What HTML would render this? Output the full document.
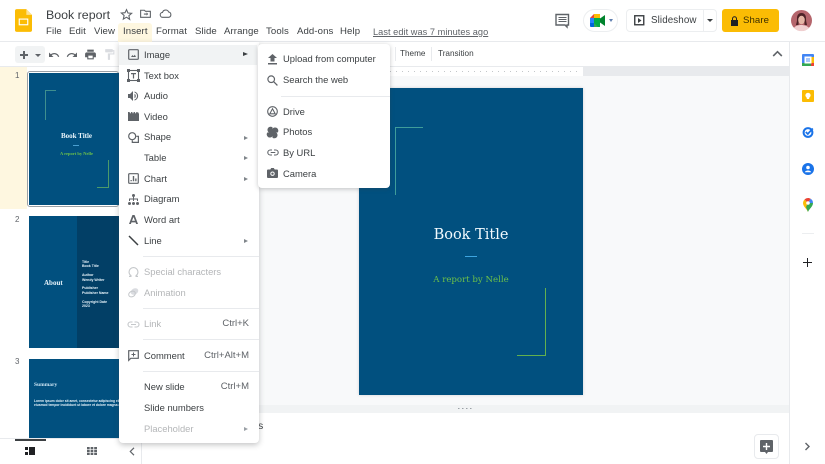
<!DOCTYPE html>
<html><head><meta charset="utf-8">
<style>
html,body{margin:0;padding:0;width:825px;height:464px;overflow:hidden;background:#fff;font-family:"Liberation Sans",sans-serif;color:#3c4043}
*{box-sizing:border-box}
.a{position:absolute;white-space:nowrap}
svg.a{display:block;overflow:visible}
.m{font-size:9.6px;line-height:12px;top:26px;color:#3c4043;letter-spacing:.1px}
.i{font-size:9.4px;line-height:12px;color:#3c4043;left:144px;margin-top:1px}
.s{font-size:9.4px;line-height:12px;color:#3c4043;left:283px;margin-top:1px}
.d{color:#b4b6b8}
.k{font-size:9.5px;line-height:12px;color:#5f6368;right:576px;text-align:right;margin-top:1px}
.ar{width:0;height:0;border-left:4px solid #80868b;border-top:2.5px solid transparent;border-bottom:2.5px solid transparent;left:244px;margin-top:1px}
.sep{height:1px;background:#e8eaed}
.serif{font-family:"Liberation Serif",serif;font-weight:700}
.th{background:#01507f;overflow:hidden}
</style></head><body>

<!-- canvas backgrounds -->
<div class="a" style="left:142px;top:66px;width:647px;height:340px;background:#f8f9fa"></div>
<div class="a" style="left:142px;top:66px;width:647px;height:10px;background:#e8eaed"></div>
<div class="a" style="left:359px;top:66px;width:224px;height:10px;background:#fff"></div>
<div class="a" style="left:142px;top:405px;width:647px;height:7px;background:#f1f3f4"></div>
<div class="a" style="left:0;top:41px;width:825px;height:1px;background:#e8eaed"></div>
<div class="a" style="left:789px;top:42px;width:1px;height:422px;background:#e8eaed"></div>
<div class="a" style="left:141px;top:66px;width:1px;height:398px;background:#e8eaed"></div>
<div class="a" style="left:0;top:66px;width:789px;height:1px;background:#e8eaed"></div>

<!-- header -->
<svg class="a" style="left:15px;top:9px" width="17" height="23" viewBox="0 0 18 24"><path d="M2 0h10l6 6v16a2 2 0 0 1-2 2H2a2 2 0 0 1-2-2V2a2 2 0 0 1 2-2z" fill="#fbbc04"/><path d="M12 0l6 6h-6z" fill="#fde293"/><rect x="4.5" y="10.500" width="9" height="6" fill="none" stroke="#fff" stroke-width="1.200"/></svg>
<div class="a" style="left:46px;top:7px;font-size:12.4px;line-height:16px;color:#3c4043">Book report</div>
<svg class="a" style="left:120px;top:8px" width="13" height="13" viewBox="0 0 24 24"><path d="M12 3l2.700 6.200 6.800.6-5.100 4.500 1.500 6.700L12 17l-5.900 3.500 1.500-6.700-5.100-4.500 6.800-.6z" fill="none" stroke="#5f6368" stroke-width="2"/></svg>
<svg class="a" style="left:139px;top:7px" width="13" height="13" viewBox="0 0 24 24"><path d="M3 6h7l2 2h9v11H3z" fill="none" stroke="#5f6368" stroke-width="2"/><path d="M14 10l3 3-3 3zM9 12h6v2H9z" fill="#5f6368"/></svg>
<svg class="a" style="left:159px;top:7px" width="13" height="13" viewBox="0 0 24 24"><path d="M7 19a4.500 4.500 0 0 1-.5-9 6 6 0 0 1 11.300-.8A5 5 0 0 1 18 19z" fill="none" stroke="#5f6368" stroke-width="2"/></svg>

<div class="a m" style="left:46px">File</div>
<div class="a m" style="left:69px">Edit</div>
<div class="a m" style="left:94px">View</div>
<div class="a" style="left:118px;top:23px;width:34px;height:19px;background:#fef7e0;border-radius:3px 3px 0 0"></div>
<div class="a m" style="left:123px">Insert</div>
<div class="a m" style="left:156px">Format</div>
<div class="a m" style="left:195px">Slide</div>
<div class="a m" style="left:224px">Arrange</div>
<div class="a m" style="left:266px">Tools</div>
<div class="a m" style="left:297px">Add-ons</div>
<div class="a m" style="left:340px">Help</div>
<div class="a m" style="left:373px;color:#5f6368;text-decoration:underline;font-size:9.2px;letter-spacing:.05px">Last edit was 7 minutes ago</div>

<!-- top right -->
<svg class="a" style="left:555px;top:13px" width="15" height="15" viewBox="0 0 15 15"><path d="M1 1.500h12.500v10.500h-1.500v2l-2-2H1z" fill="none" stroke="#5f6368" stroke-width="1.400"/><path d="M3.500 4h8v1h-8zM3.500 6h8v1h-8zM3.500 8h8v1h-8z" fill="#5f6368"/></svg>
<div class="a" style="left:583px;top:9px;width:35px;height:23px;border:1px solid #eceef0;border-radius:12px"></div>
<svg class="a" style="left:590px;top:14px" width="16" height="13" viewBox="0 0 16 13"><path d="M4 0h6v4H4z" fill="#fbbc04"/><path d="M0 4h4v5H0z" fill="#2684fc"/><path d="M0 9h4v4H1a1 1 0 0 1-1-1z" fill="#0066da"/><path d="M0 4l4-4v4z" fill="#ea4335"/><path d="M4 9h6v4H4z" fill="#34a853"/><path d="M10 0v13l-1 0H8L4 9V4h6z" fill="#00ac47"/><path d="M10 4.500l5-3.500v11l-5-3.500z" fill="#00832d"/></svg>
<div class="a" style="left:609px;top:19px;border-left:2.500px solid transparent;border-right:2.500px solid transparent;border-top:3px solid #5f7fb0"></div>
<div class="a" style="left:626px;top:9px;width:91px;height:23px;border:1px solid #eceef0;border-radius:4px"></div>
<div class="a" style="left:703px;top:9px;width:1px;height:23px;background:#eceef0"></div>
<svg class="a" style="left:634px;top:15px" width="11" height="11" viewBox="0 0 11 11"><rect x=".75" y=".75" width="9" height="9" fill="none" stroke="#3c4043" stroke-width="1.400"/><path d="M4 3l3.500 2.500L4 8z" fill="#3c4043"/></svg>
<div class="a" style="left:651px;top:14px;font-size:9.8px;line-height:13px;color:#3c4043;letter-spacing:.1px">Slideshow</div>
<div class="a" style="left:707px;top:19px;border-left:3px solid transparent;border-right:3px solid transparent;border-top:3px solid #3c4043"></div>
<div class="a" style="left:722px;top:9px;width:57px;height:23px;background:#fbbc04;border-radius:3px"></div>
<svg class="a" style="left:730px;top:16px" width="9" height="10" viewBox="0 0 9 10"><path d="M2 4V2.800a2.500 2.500 0 0 1 5 0V4h1v6H1V4zm1 0h3V2.800a1.500 1.500 0 0 0-3 0z" fill="#202124"/></svg>
<div class="a" style="left:743px;top:14px;font-size:9.6px;line-height:13px;color:#3c2f00;letter-spacing:.1px">Share</div>
<svg class="a" style="left:791px;top:10px" width="21" height="21" viewBox="0 0 21 21"><circle cx="10.500" cy="10.500" r="10.500" fill="#b5656c"/><path d="M3 18c2-4 12-4 15 0a10.500 10.500 0 0 1-15 0z" fill="#f0cfd0"/><path d="M10.500 3c-3.500 0-4.700 3-4.500 6 .1 3-1 5-1 6h2.500V9h6v6H16c0-1-1-3-1-6 .2-3-1-6-4.500-6z" fill="#4d2226"/><ellipse cx="10.500" cy="10" rx="3.300" ry="4.200" fill="#e4b5a5"/></svg>

<!-- toolbar -->
<div class="a" style="left:15px;top:46px;width:30px;height:17px;background:#f1f3f4;border-radius:3px"></div>
<div class="a" style="left:20px;top:54px;width:8px;height:1.500px;background:#5f6368"></div>
<div class="a" style="left:23.300px;top:50.500px;width:1.500px;height:8px;background:#5f6368"></div>
<div class="a" style="left:35px;top:53.500px;border-left:3px solid transparent;border-right:3px solid transparent;border-top:3px solid #5f6368"></div>
<svg class="a" style="left:48px;top:49px" width="12" height="12" viewBox="0 0 24 24"><path d="M12.500 8c-2.650 0-5.050 1-6.900 2.600L2 7v9h9l-3.620-3.620c1.390-1.160 3.160-1.880 5.120-1.880 3.540 0 6.550 2.310 7.600 5.500l2.370-.78C21.080 11.030 17.150 8 12.500 8z" fill="#5f6368"/></svg>
<svg class="a" style="left:66px;top:49px" width="12" height="12" viewBox="0 0 24 24"><path d="M18.400 10.600C16.550 9 14.150 8 11.500 8c-4.650 0-8.580 3.030-9.960 7.220L3.900 16c1.050-3.190 4.050-5.500 7.600-5.500 1.950 0 3.730.72 5.120 1.880L13 16h9V7z" fill="#5f6368"/></svg>
<svg class="a" style="left:84px;top:48px" width="13" height="13" viewBox="0 0 24 24"><path d="M19 8H5c-1.660 0-3 1.340-3 3v6h4v4h12v-4h4v-6c0-1.660-1.340-3-3-3zm-3 11H8v-5h8zM18 3H6v4h12z" fill="#5f6368"/></svg>
<svg class="a" style="left:103px;top:48px" width="13" height="13" viewBox="0 0 24 24"><path d="M18 4V3c0-.55-.45-1-1-1H5c-.55 0-1 .45-1 1v4c0 .55.45 1 1 1h12c.55 0 1-.45 1-1V6h1v4H9v11c0 .55.45 1 1 1h2c.55 0 1-.45 1-1v-9h8V4z" fill="#dadce0"/></svg>
<div class="a" style="left:395px;top:47px;width:1px;height:14px;background:#e8eaed"></div>
<div class="a" style="left:400px;top:48px;font-size:8.2px;line-height:12px;color:#3c4043">Theme</div>
<div class="a" style="left:431px;top:47px;width:1px;height:14px;background:#e8eaed"></div>
<div class="a" style="left:438px;top:48px;font-size:8.2px;line-height:12px;color:#3c4043">Transition</div>
<svg class="a" style="left:772px;top:50px" width="11" height="7" viewBox="0 0 11 7"><path d="M1.200 6l4.300-4.300L9.800 6" fill="none" stroke="#5f6368" stroke-width="1.600"/></svg>
<!-- ruler ticks -->
<div class="a" style="left:390px;top:71px;width:192px;height:1px;background:repeating-linear-gradient(90deg,#c4c7ca 0 1px,transparent 1px 6px)"></div>

<!-- filmstrip -->
<div class="a" style="left:0;top:67px;width:27px;height:142px;background:#fef7e0"></div>
<div class="a" style="left:27px;top:71px;width:92px;height:136px;border:1.500px solid #9aa0a6;border-radius:3px;background:#fff"></div>
<div class="a" style="left:15px;top:71px;font-size:8px;line-height:10px;color:#5f6368">1</div>
<div class="a" style="left:15px;top:215px;font-size:8px;line-height:10px;color:#5f6368">2</div>
<div class="a" style="left:15px;top:357px;font-size:8px;line-height:10px;color:#5f6368">3</div>

<div class="a th" style="left:29px;top:73px;width:90px;height:132px"></div>
<div class="a" style="left:45px;top:90px;width:11px;height:30px;border-left:1px solid #3f8f8e;border-top:1px solid #3f8f8e"></div>
<div class="a" style="left:97px;top:160px;width:12px;height:28px;border-right:1px solid #4c9a6a;border-bottom:1px solid #4c9a6a"></div>
<div class="a serif" style="left:29px;top:131px;width:95px;text-align:center;font-size:7px;line-height:10px;color:#e8f4fb">Book Title</div>
<div class="a" style="left:73px;top:145px;width:6px;height:1px;background:#4a9fd0"></div>
<div class="a serif" style="left:29px;top:150px;width:95px;text-align:center;font-size:4.500px;line-height:8px;color:#6cc04a">A report by Nelle</div>

<div class="a th" style="left:29px;top:216px;width:90px;height:132px"></div>
<div class="a" style="left:77px;top:216px;width:42px;height:132px;background:#023f66"></div>
<div class="a serif" style="left:44px;top:278px;font-size:7px;line-height:10px;color:#e8f4fb">About</div>
<div class="a" style="left:82px;top:260px;font-size:3.500px;line-height:4.400px;font-weight:700;color:#e8f4fb">Title<br>Book Title<br><br>Author<br>Wendy Writer<br><br>Publisher<br>Publisher Name<br><br>Copyright Date<br>2023</div>

<div class="a th" style="left:29px;top:359px;width:90px;height:79px"></div>
<div class="a serif" style="left:34px;top:382px;font-size:5.500px;line-height:7px;color:#cde6f5">Summary</div>
<div class="a" style="left:34px;top:399px;font-size:3.300px;line-height:4.200px;font-weight:700;color:#e8f4fb">Lorem ipsum dolor sit amet, consectetur adipiscing elit, sed do<br>eiusmod tempor incididunt ut labore et dolore magna aliqua</div>

<div class="a" style="left:0;top:439px;width:141px;height:25px;background:#fff"></div>
<div class="a" style="left:0;top:438px;width:141px;height:1px;background:#e8eaed"></div>
<div class="a" style="left:15px;top:439px;width:31px;height:1.500px;background:#3c4043"></div>
<svg class="a" style="left:25px;top:447px" width="10" height="8" viewBox="0 0 10 8"><path d="M0 0h3v3H0zM0 5h3v3H0zM4 0h6v8H4z" fill="#202124"/></svg>
<svg class="a" style="left:87px;top:447px" width="10" height="8" viewBox="0 0 10 8"><path d="M0 0h2.700v2.300H0zM3.600 0h2.700v2.300H3.600zM7.200 0H10v2.300H7.200zM0 2.900h2.700v2.200H0zM3.600 2.900h2.700v2.200H3.600zM7.200 2.900H10v2.200H7.200zM0 5.700h2.700V8H0zM3.600 5.700h2.700V8H3.600zM7.200 5.700H10V8H7.200z" fill="#5f6368"/></svg>
<svg class="a" style="left:129px;top:447px" width="6" height="9" viewBox="0 0 6 9"><path d="M5 .8L1.300 4.500 5 8.200" fill="none" stroke="#5f6368" stroke-width="1.200"/></svg>

<!-- main slide -->
<div class="a" style="left:359px;top:88px;width:224px;height:307px;background:#01507f;box-shadow:0 0 3px rgba(60,64,67,.2)"></div>
<div class="a" style="left:395px;top:127px;width:28px;height:68px;border-left:1px solid #3f9c9a;border-top:1px solid #3f9c9a"></div>
<div class="a" style="left:517px;top:288px;width:29px;height:68px;border-right:1px solid #62b04e;border-bottom:1px solid #62b04e"></div>
<div class="a" style="left:359px;top:226px;width:224px;text-align:center;font-family:'DejaVu Serif',serif;font-size:14.500px;line-height:18px;color:#f2fafe">Book Title</div>
<div class="a" style="left:465px;top:256px;width:12px;height:1px;background:#3ea5e0"></div>
<div class="a" style="left:359px;top:274px;width:224px;text-align:center;font-family:'DejaVu Serif',serif;font-size:8.600px;line-height:13px;color:#6cc04a">A report by Nelle</div>

<!-- notes -->
<div class="a" style="left:142px;top:412px;width:647px;height:1px;background:#f1f3f4"></div>
<div class="a" style="left:458px;top:408px;width:14px;height:1px;background:repeating-linear-gradient(90deg,#9aa0a6 0 1.500px,transparent 1.500px 4px)"></div>
<div class="a" style="left:258px;top:420px;font-size:10.500px;line-height:13px;color:#3c4043">s</div>
<div class="a" style="left:754px;top:434px;width:25px;height:25px;border:1px solid #e8eaed;border-radius:4px;background:#fff"></div>
<svg class="a" style="left:760px;top:440px" width="13" height="14" viewBox="0 0 13 14"><path d="M1 0h11a1 1 0 0 1 1 1v10a1 1 0 0 1-1 1H8l-1.500 2L5 12H1a1 1 0 0 1-1-1V1a1 1 0 0 1 1-1z" fill="#5f6368"/><path d="M5.800 3h1.400v2.800H10v1.400H7.200V10H5.800V7.200H3V5.800h2.800z" fill="#fff"/></svg>
<svg class="a" style="left:804px;top:442px" width="7" height="9" viewBox="0 0 7 9"><path d="M1.500 1l3.500 3.500L1.500 8" fill="none" stroke="#5f6368" stroke-width="1.400"/></svg>

<!-- side panel -->
<svg class="a" style="left:802px;top:54px" width="12" height="12" viewBox="0 0 12 12"><rect width="12" height="12" rx="1" fill="#4285f4"/><rect x="0" y="9" width="9" height="3" fill="#34a853"/><rect x="9" y="3" width="3" height="6" fill="#fbbc04"/><rect x="9" y="9" width="3" height="3" fill="#ea4335"/><rect x="2.500" y="2.500" width="7" height="7" fill="#fff"/><rect x="4" y="4" width="4" height="4" fill="#a8c7fa"/></svg>
<svg class="a" style="left:802px;top:90px" width="12" height="12" viewBox="0 0 12 12"><rect width="12" height="12" rx="1" fill="#fbbc04"/><circle cx="6" cy="5.300" r="2.600" fill="#fff"/><rect x="4.800" y="7.500" width="2.400" height="1.500" fill="#fff"/></svg>
<svg class="a" style="left:802px;top:126px" width="12" height="12" viewBox="0 0 12 12"><circle cx="6" cy="6.500" r="4.400" fill="none" stroke="#1a73e8" stroke-width="2"/><path d="M3.800 6l2 2 5-5.500" fill="none" stroke="#1a73e8" stroke-width="1.700"/></svg>
<svg class="a" style="left:802px;top:163px" width="12" height="12" viewBox="0 0 12 12"><circle cx="6" cy="6" r="6" fill="#1a73e8"/><circle cx="6" cy="4.500" r="1.800" fill="#fff"/><path d="M2.800 9.300c.5-2.400 5.900-2.400 6.400 0z" fill="#fff"/></svg>
<svg class="a" style="left:803px;top:198px" width="10" height="14" viewBox="0 0 10 14"><path d="M5 14C4 11 0 8.500 0 5a5 5 0 0 1 1.500-3.500L5 5z" fill="#fbbc04"/><path d="M1.500 1.500A5 5 0 0 1 5 0c1 0 2 .3 2.700.8L5 5z" fill="#ea4335"/><path d="M7.700.8A5 5 0 0 1 10 5L5 5z" fill="#4285f4"/><path d="M10 5c0 3.500-4 6-5 9L3 9l2-4z" fill="#34a853"/><circle cx="5" cy="5" r="1.800" fill="#fff"/></svg>
<div class="a" style="left:802px;top:233px;width:12px;height:1px;background:#eceef0"></div>
<div class="a" style="left:803px;top:261.500px;width:9px;height:1.300px;background:#202124"></div>
<div class="a" style="left:807px;top:257.500px;width:1.300px;height:9px;background:#202124"></div>

<!-- insert menu -->
<div class="a" style="left:119px;top:42px;width:140px;height:401px;background:#fff;border-radius:0 0 4px 4px;box-shadow:0 2px 6px rgba(60,64,67,.3)"></div>
<div class="a" style="left:119px;top:45px;width:138px;height:20px;background:#f1f3f4"></div>

<svg class="a" style="left:128px;top:49px" width="11" height="11" viewBox="0 0 11 11"><rect x=".7" y=".7" width="9.600" height="9.600" rx=".8" fill="none" stroke="#5f6368" stroke-width="1.200"/><path d="M3 8l1.500-2 1 1.200L6.800 5.800 8 8z" fill="#5f6368"/></svg>
<div class="a i" style="top:48px">Image</div>
<div class="a" style="left:243px;top:52px;border-left:5px solid #3c4043;border-top:2.500px solid transparent;border-bottom:2.500px solid transparent"></div>

<svg class="a" style="left:127px;top:69px" width="13" height="13" viewBox="0 0 13 13"><rect x="1.500" y="1.500" width="10" height="10" fill="none" stroke="#5f6368" stroke-width="1.100"/><path d="M0 0h3v3H0zM10 0h3v3h-3zM0 10h3v3H0zM10 10h3v3h-3z" fill="#5f6368"/><path d="M4 4h5v1.200H7.100V9.500H5.900V5.200H4z" fill="#5f6368"/></svg>
<div class="a i" style="top:69px">Text box</div>

<svg class="a" style="left:128px;top:91px" width="11" height="10" viewBox="0 0 11 10"><path d="M0 3h2l3-3v10L2 7H0z" fill="#5f6368"/><path d="M6.500 2.800a2.500 2.500 0 0 1 0 4.400zM6.500 .5v1a3.700 3.700 0 0 1 0 7v1a4.600 4.600 0 0 0 0-9z" fill="#5f6368"/></svg>
<div class="a i" style="top:89px">Audio</div>

<svg class="a" style="left:128px;top:112px" width="11" height="9" viewBox="0 0 11 9"><path d="M0 0h1.500l.8 1.800L3.200 0h1l.8 1.800L5.800 0h1l.8 1.800L8.500 0h1l.7 1.800L11 0v9H0z" fill="#5f6368"/></svg>
<div class="a i" style="top:110px">Video</div>

<svg class="a" style="left:128px;top:132px" width="11" height="11" viewBox="0 0 11 11"><circle cx="4.200" cy="4.200" r="3.500" fill="none" stroke="#5f6368" stroke-width="1.200"/><path d="M8.300 4.300h2.100v6.100H4.300V8.300" fill="none" stroke="#5f6368" stroke-width="1.200"/></svg>
<div class="a i" style="top:130px">Shape</div>
<div class="a ar" style="top:135px"></div>

<div class="a i" style="top:151px">Table</div>
<div class="a ar" style="top:155px"></div>

<svg class="a" style="left:128px;top:173px" width="11" height="11" viewBox="0 0 11 11"><rect x=".7" y=".7" width="9.600" height="9.600" rx=".8" fill="none" stroke="#5f6368" stroke-width="1.200"/><path d="M2.500 7h1.300v1.300H2.500zM4.800 3h1.400v5.300H4.800zM7.200 5.500h1.300v2.800H7.200z" fill="#5f6368"/></svg>
<div class="a i" style="top:172px">Chart</div>
<div class="a ar" style="top:176px"></div>

<svg class="a" style="left:128px;top:194px" width="11" height="11" viewBox="0 0 11 11"><circle cx="5.500" cy="1.500" r="1.500" fill="#5f6368"/><circle cx="1.500" cy="9.500" r="1.500" fill="#5f6368"/><circle cx="5.500" cy="9.500" r="1.500" fill="#5f6368"/><circle cx="9.500" cy="9.500" r="1.500" fill="#5f6368"/><path d="M1.500 7V5h8v2M5.500 3v4" fill="none" stroke="#5f6368" stroke-width="1"/></svg>
<div class="a i" style="top:192px">Diagram</div>

<svg class="a" style="left:129px;top:215px" width="9" height="9" viewBox="0 0 11 11"><path d="M4.200 0h2.600L11 11H8.700L8 9H3l-.7 2H0zM3.700 7h3.600L5.500 2.500z" fill="#5f6368"/></svg>
<div class="a i" style="top:213px">Word art</div>

<svg class="a" style="left:128px;top:235px" width="11" height="11" viewBox="0 0 11 11"><path d="M1 1l9 9" stroke="#3c4043" stroke-width="1.500"/></svg>
<div class="a i" style="top:234px">Line</div>
<div class="a ar" style="top:238px"></div>

<div class="a sep" style="left:143px;top:256px;width:116px"></div>

<svg class="a" style="left:128px;top:267px" width="11" height="11" viewBox="0 0 11 11"><path d="M3.500 10H1V8.800h1.300C1.200 7.800.5 6.500.5 5a5 5 0 0 1 10 0c0 1.500-.7 2.800-1.800 3.800H10V10H7.500V8.200C8.700 7.500 9.400 6.400 9.400 5a3.900 3.900 0 0 0-7.800 0c0 1.400.7 2.500 1.900 3.200z" fill="#c4c7ca"/></svg>
<div class="a i d" style="top:265px">Special characters</div>
<svg class="a" style="left:128px;top:287px" width="11" height="11" viewBox="0 0 11 11"><ellipse cx="6.500" cy="4.500" rx="4" ry="3" transform="rotate(-30 6.500 4.500)" fill="#dadce0"/><ellipse cx="4" cy="7" rx="3.500" ry="2.700" transform="rotate(-30 4 7)" fill="none" stroke="#c4c7ca"/></svg>
<div class="a i d" style="top:286px">Animation</div>

<div class="a sep" style="left:143px;top:308px;width:116px"></div>

<svg class="a" style="left:127px;top:321px" width="13" height="7" viewBox="0 0 13 7"><path d="M5.500 1H3.500a2.500 2.500 0 0 0 0 5h2M7.500 1h2a2.500 2.500 0 0 1 0 5h-2M4 3.500h5" fill="none" stroke="#c4c7ca" stroke-width="1.100"/></svg>
<div class="a i d" style="top:317px">Link</div>
<div class="a k d" style="top:317px">Ctrl+K</div>

<div class="a sep" style="left:143px;top:339px;width:116px"></div>

<svg class="a" style="left:128px;top:350px" width="11" height="11" viewBox="0 0 11 11"><path d="M.7.700h9.600v7.600H2.800L.7 10.300z" fill="none" stroke="#5f6368" stroke-width="1.200"/><path d="M5 2.500h1v1.500h1.500v1H6v1.500H5V5H3.500V4H5z" fill="#5f6368"/></svg>
<div class="a i" style="top:349px">Comment</div>
<div class="a k" style="top:349px">Ctrl+Alt+M</div>

<div class="a sep" style="left:143px;top:371px;width:116px"></div>

<div class="a i" style="top:380px">New slide</div>
<div class="a k" style="top:380px">Ctrl+M</div>
<div class="a i" style="top:401px">Slide numbers</div>
<div class="a i d" style="top:422px">Placeholder</div>
<div class="a ar" style="top:426px;border-left-color:#9aa0a6"></div>

<!-- submenu -->
<div class="a" style="left:258px;top:44px;width:132px;height:144px;background:#fff;border-radius:4px;box-shadow:0 1px 5px rgba(60,64,67,.3)"></div>
<svg class="a" style="left:268px;top:54px" width="9" height="11" viewBox="0 0 9 11"><path d="M2.500 7.500V4H0l4.500-4L9 4H6.500v3.500zM0 9h9v1.500H0z" fill="#5f6368"/></svg>
<div class="a s" style="top:52px">Upload from computer</div>
<svg class="a" style="left:267px;top:75px" width="11" height="11" viewBox="0 0 11 11"><circle cx="4.200" cy="4.200" r="3.300" fill="none" stroke="#5f6368" stroke-width="1.200"/><path d="M6.700 6.700l3.700 3.700" stroke="#5f6368" stroke-width="1.300"/></svg>
<div class="a s" style="top:73px">Search the web</div>
<div class="a sep" style="left:281px;top:96px;width:109px"></div>
<svg class="a" style="left:267px;top:106px" width="11" height="11" viewBox="0 0 11 11"><circle cx="5.500" cy="5.500" r="4.800" fill="none" stroke="#5f6368" stroke-width="1.100"/><path d="M5.500 2.800L8.200 7.800H2.800z" fill="none" stroke="#5f6368" stroke-width="1.100"/></svg>
<div class="a s" style="top:105px">Drive</div>
<svg class="a" style="left:266px;top:126px" width="13" height="13" viewBox="0 0 13 13"><path d="M6.500 6.500H2.800A3 3 0 0 1 6.500 1.300zM6.500 6.500V2.800a3 3 0 0 1 5.200 3.700zM6.500 6.500h3.700a3 3 0 0 1-3.700 5.200zM6.500 6.500v3.700A3 3 0 0 1 1.300 6.500z" fill="#5f6368"/></svg>
<div class="a s" style="top:125px">Photos</div>
<svg class="a" style="left:267px;top:149px" width="12" height="7" viewBox="0 0 12 7"><path d="M5 1H3.300a2.500 2.500 0 0 0 0 5H5M7 1h1.700a2.500 2.500 0 0 1 0 5H7M3.700 3.500h4.600" fill="none" stroke="#5f6368" stroke-width="1.100"/></svg>
<div class="a s" style="top:146px">By URL</div>
<svg class="a" style="left:267px;top:168px" width="11" height="10" viewBox="0 0 11 10"><path d="M1 1.500h2.300L4.200 0h2.600l.9 1.500H10a1 1 0 0 1 1 1V9a1 1 0 0 1-1 1H1a1 1 0 0 1-1-1V2.500a1 1 0 0 1 1-1z" fill="#5f6368"/><circle cx="5.500" cy="5.700" r="2.200" fill="#fff"/><circle cx="5.500" cy="5.700" r="1.200" fill="#5f6368"/></svg>
<div class="a s" style="top:167px">Camera</div>

</body></html>
